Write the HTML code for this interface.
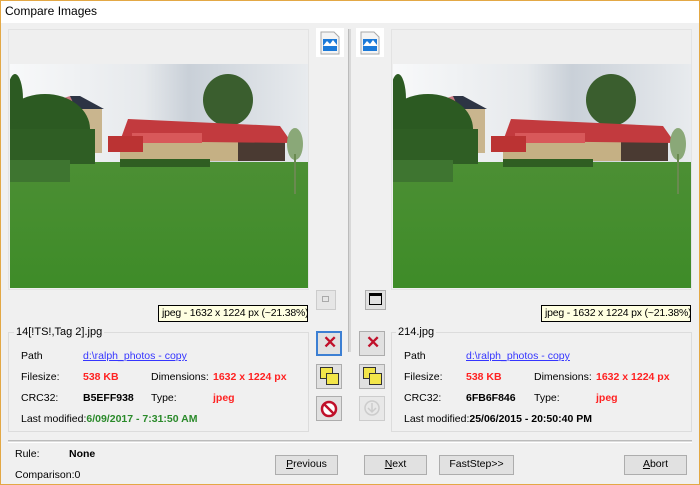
<!DOCTYPE html>
<html><head><style>
*{margin:0;padding:0;box-sizing:border-box}
body{width:700px;height:485px;overflow:hidden;font-family:"Liberation Sans",sans-serif;font-size:10.5px;color:#000;background:#f0f0f0;position:relative}
.a{position:absolute;white-space:nowrap}
.win{left:0;top:0;width:700px;height:485px;border:1px solid #e3a845}
.title{left:1px;top:1px;width:698px;height:22px;background:#fff;font-size:12px;padding:3px 0 0 4px}
.pane{background:#efefef;border:1px solid #e3e3e3}
.btn{background:#e1e1e1;border:1px solid #adadad;text-align:center;line-height:17px}
.ib{width:26px;height:25px;background:#e1e1e1;border:1px solid #adadad}
.grp{border:1px solid #dcdcdc}
.lnk{color:#3535ff;text-decoration:underline}
.red{color:#f22;font-weight:bold}
.b{font-weight:bold}
.grn{color:#2a8a2a;font-weight:bold}
.tip{background:#ffffe1;border:1px solid #000;height:17px;line-height:15px;padding-left:3px;font-size:10.5px;letter-spacing:-0.2px}
</style></head><body>
<div class="a win"></div>
<div class="a title">Compare Images</div>

<div class="a pane" style="left:8px;top:29px;width:301px;height:261px"></div>
<div class="a pane" style="left:391px;top:29px;width:301px;height:261px"></div>

<svg class="a" style="left:10px;top:64px" width="298" height="224" viewBox="0 0 298 224" id="ph">
<defs><linearGradient id="g" x1="0" y1="0" x2="0" y2="1"><stop offset="0" stop-color="#4c8f34"/><stop offset="1" stop-color="#3e8c28"/></linearGradient>
<linearGradient id="s" x1="0" y1="0" x2="1" y2="0"><stop offset="0" stop-color="#f8f9fa"/><stop offset=".45" stop-color="#e6e9ec"/><stop offset=".6" stop-color="#c9d0d8"/><stop offset="1" stop-color="#e8ebee"/></linearGradient></defs>
<rect width="298" height="110" fill="url(#s)"/>
<rect y="98" width="298" height="126" fill="url(#g)"/>
<rect x="40" y="44" width="52" height="45" fill="#c9b58e"/>
<polygon points="20,45 60,32 92,45" fill="#c87880"/>
<polygon points="60,32 70,32 94,45 66,45" fill="#2d3444"/>
<ellipse cx="218" cy="36" rx="25" ry="26" fill="#3a5e2e"/>
<rect x="110" y="77" width="165" height="20" fill="#c5b084"/>
<rect x="228" y="77" width="47" height="20" fill="#4a3a32"/>
<polygon points="118,55 270,62 282,79 110,77" fill="#c23a3e"/>
<rect x="122" y="69" width="70" height="10" fill="#d8585a"/>
<rect x="98" y="72" width="35" height="16" fill="#b33"/>
<ellipse cx="35" cy="65" rx="45" ry="35" fill="#2c5a22"/>
<ellipse cx="5" cy="35" rx="8" ry="25" fill="#2c5a22"/>
<rect x="0" y="65" width="85" height="35" fill="#2f5e24"/>
<rect x="0" y="96" width="60" height="22" fill="#3e7530"/>
<rect x="110" y="95" width="90" height="8" fill="#2f5e22"/>
<ellipse cx="285" cy="80" rx="8" ry="16" fill="#8aa878"/>
<rect x="284" y="90" width="2" height="40" fill="#6a8a50"/>
</svg>
<svg class="a" style="left:393px;top:64px" width="298" height="224"><use href="#ph"/></svg>

<div class="a tip" style="left:158px;top:305px;width:150px">jpeg - 1632 x 1224 px (~21.38%)</div>
<div class="a tip" style="left:541px;top:305px;width:150px">jpeg - 1632 x 1224 px (~21.38%)</div>

<div class="a" style="left:348px;top:29px;width:3px;height:323px;background:#d8d8d8;border-left:1px solid #bbb"></div>
<div class="a" style="left:316px;top:28px;width:28px;height:29px;background:#fff"></div>
<div class="a" style="left:356px;top:28px;width:28px;height:29px;background:#fff"></div>
<svg class="a" style="left:320px;top:31px" width="20" height="24"><path d="M1 1h13l5 5v17H1z" fill="#f4f4f4" stroke="#aaa"/><rect x="3" y="8" width="14" height="12" fill="#1c7ad8"/><path d="M3 15l4-5 3 3 3-4 4 5v1H3z" fill="#fff"/></svg>
<svg class="a" style="left:360px;top:31px" width="20" height="24"><path d="M1 1h13l5 5v17H1z" fill="#f4f4f4" stroke="#aaa"/><rect x="3" y="8" width="14" height="12" fill="#1c7ad8"/><path d="M3 15l4-5 3 3 3-4 4 5v1H3z" fill="#fff"/></svg>

<div class="a ib" style="left:316px;top:290px;width:20px;height:20px;background:#e6e6e6;border-color:#ccc"></div>
<div class="a" style="left:322px;top:296px;width:7px;height:6px;border:1px solid #aaa"></div>
<div class="a ib" style="left:365px;top:290px;width:21px;height:20px"></div>
<div class="a" style="left:369px;top:293px;width:13px;height:12px;border:1px solid #000;border-top-width:3px"></div>

<div class="a ib" style="left:316px;top:331px;border:2px solid #3c7fd3"></div>
<div class="a ib" style="left:359px;top:331px"></div>
<div class="a red" style="left:323px;top:333px;font-size:17px;color:#c0102a">✕</div>
<div class="a red" style="left:366px;top:333px;font-size:17px;color:#c0102a">✕</div>
<div class="a ib" style="left:316px;top:364px"></div>
<div class="a ib" style="left:359px;top:364px"></div>
<div class="a" style="left:320px;top:367px;width:13px;height:12px;background:#f3e64a;border:1px solid #333"></div>
<div class="a" style="left:326px;top:373px;width:13px;height:12px;background:#f3e64a;border:1px solid #333"></div>
<div class="a" style="left:363px;top:367px;width:13px;height:12px;background:#f3e64a;border:1px solid #333"></div>
<div class="a" style="left:369px;top:373px;width:13px;height:12px;background:#f3e64a;border:1px solid #333"></div>
<div class="a ib" style="left:316px;top:396px"></div>
<svg class="a" style="left:320px;top:400px" width="18" height="18"><circle cx="9" cy="9" r="7" fill="#fff" stroke="#c0102a" stroke-width="2.5"/><path d="M4 4l10 10" stroke="#c0102a" stroke-width="2.5"/></svg>
<div class="a ib" style="left:359px;top:396px;background:#e8e8e8;border-color:#ccc"></div>
<svg class="a" style="left:363px;top:399px" width="18" height="18"><circle cx="9" cy="9" r="7" fill="none" stroke="#ccc" stroke-width="1.5"/><path d="M9 4v9M5 9l4 4 4-4" stroke="#ccc" stroke-width="1.5" fill="none"/></svg>

<div class="a grp" style="left:8px;top:332px;width:301px;height:100px"></div>
<div class="a" style="left:14px;top:326px;background:#f0f0f0;padding:0 2px;font-size:11px">14[!TS!,Tag 2].jpg</div>
<div class="a" style="left:21px;top:350px">Path</div>
<div class="a lnk" style="left:83px;top:350px">d:\ralph_photos - copy</div>
<div class="a" style="left:21px;top:371px">Filesize:</div>
<div class="a red" style="left:83px;top:371px">538 KB</div>
<div class="a" style="left:151px;top:371px">Dimensions:</div>
<div class="a red" style="left:213px;top:371px">1632 x 1224 px</div>
<div class="a" style="left:21px;top:392px">CRC32:</div>
<div class="a b" style="left:83px;top:392px">B5EFF938</div>
<div class="a" style="left:151px;top:392px">Type:</div>
<div class="a red" style="left:213px;top:392px">jpeg</div>
<div class="a" style="left:21px;top:413px">Last modified:<span class="grn">6/09/2017 - 7:31:50 AM</span></div>

<div class="a grp" style="left:391px;top:332px;width:301px;height:100px"></div>
<div class="a" style="left:396px;top:326px;background:#f0f0f0;padding:0 2px;font-size:11px">214.jpg</div>
<div class="a" style="left:404px;top:350px">Path</div>
<div class="a lnk" style="left:466px;top:350px">d:\ralph_photos - copy</div>
<div class="a" style="left:404px;top:371px">Filesize:</div>
<div class="a red" style="left:466px;top:371px">538 KB</div>
<div class="a" style="left:534px;top:371px">Dimensions:</div>
<div class="a red" style="left:596px;top:371px">1632 x 1224 px</div>
<div class="a" style="left:404px;top:392px">CRC32:</div>
<div class="a b" style="left:466px;top:392px">6FB6F846</div>
<div class="a" style="left:534px;top:392px">Type:</div>
<div class="a red" style="left:596px;top:392px">jpeg</div>
<div class="a" style="left:404px;top:413px">Last modified:<span class="b">25/06/2015 - 20:50:40 PM</span></div>

<div class="a" style="left:8px;top:440px;width:684px;height:3px;border-top:1px solid #bbb;border-bottom:1px solid #fff;background:#ddd"></div>
<div class="a" style="left:15px;top:448px">Rule:</div>
<div class="a b" style="left:69px;top:448px">None</div>
<div class="a" style="left:15px;top:469px">Comparison:0</div>
<div class="a btn" style="left:275px;top:455px;width:63px;height:20px"><u>P</u>revious</div>
<div class="a btn" style="left:364px;top:455px;width:63px;height:20px"><u>N</u>ext</div>
<div class="a btn" style="left:439px;top:455px;width:75px;height:20px">FastStep&gt;&gt;</div>
<div class="a btn" style="left:624px;top:455px;width:63px;height:20px"><u>A</u>bort</div>
</body></html>
